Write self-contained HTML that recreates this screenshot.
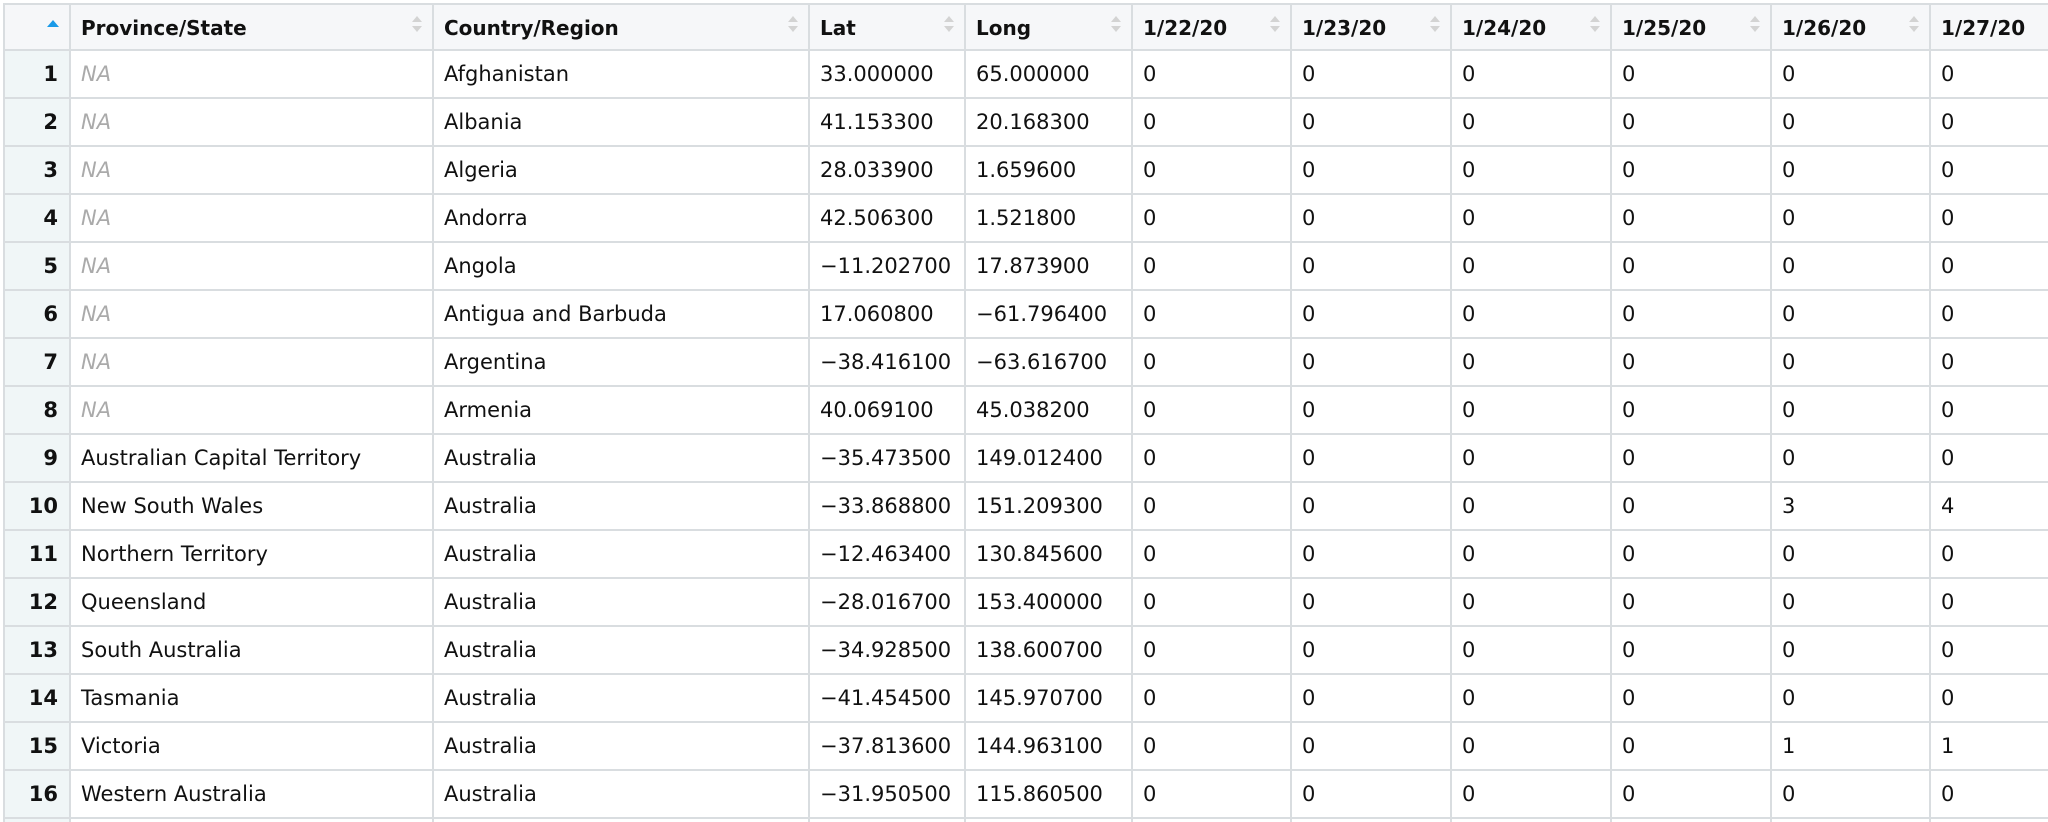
<!DOCTYPE html>
<html><head><meta charset="utf-8"><style>
html,body{margin:0;padding:0;background:#fff;width:2048px;height:822px;overflow:hidden}
#t{position:absolute;left:3px;top:3px;font-family:"DejaVu Sans","Liberation Sans",sans-serif;font-size:21px;color:#111;border-top:2px solid #d9dde0;border-left:2px solid #d9dde0}
.r{display:flex;height:48px}
.r>div{box-sizing:border-box;height:48px;border-right:2px solid #d9dde0;border-bottom:2px solid #d9dde0;padding:0 0 0 10px;line-height:47px;white-space:nowrap;overflow:hidden;position:relative;flex:none}
.h>div{background:#f6f7f9;font-weight:bold;font-size:20px;line-height:46px;height:46px}
.h{height:46px}
.r>div:nth-child(1){width:66px;background:#f0f6f7;text-align:right;font-weight:bold;padding:0 11px 0 0}
.h>div:nth-child(1){background:#f6f7f9}
.r>div:nth-child(2){width:363px}
.r>div:nth-child(3){width:376px}
.r>div:nth-child(4){width:156px}
.r>div:nth-child(5){width:167px}
.r>div:nth-child(6){width:159px}
.r>div:nth-child(7){width:160px}
.r>div:nth-child(8){width:160px}
.r>div:nth-child(9){width:160px}
.r>div:nth-child(10){width:159px}
.r>div:nth-child(11){width:160px}
.r.e,.r.e>div{height:3px;border-bottom:none}
.na{color:#aaa;font-style:italic}
.s{position:absolute;right:10px;top:11px;width:10px;height:18px}
.s:before{content:"";position:absolute;left:0;top:0;border-left:5px solid transparent;border-right:5px solid transparent;border-bottom:6px solid #d3d3d3}
.s:after{content:"";position:absolute;left:0;top:10px;border-left:5px solid transparent;border-right:5px solid transparent;border-top:6px solid #d3d3d3}
.b{position:absolute;right:10px;top:15px;border-left:6px solid transparent;border-right:6px solid transparent;border-bottom:7px solid #1a9ae8}
</style></head><body>
<div id="t">
<div class="r h"><div><span class="b"></span></div><div>Province/State<span class="s"></span></div><div>Country/Region<span class="s"></span></div><div>Lat<span class="s"></span></div><div>Long<span class="s"></span></div><div>1/22/20<span class="s"></span></div><div>1/23/20<span class="s"></span></div><div>1/24/20<span class="s"></span></div><div>1/25/20<span class="s"></span></div><div>1/26/20<span class="s"></span></div><div>1/27/20</div></div>
<div class="r"><div>1</div><div class="na">NA</div><div>Afghanistan</div><div>33.000000</div><div>65.000000</div><div>0</div><div>0</div><div>0</div><div>0</div><div>0</div><div>0</div></div>
<div class="r"><div>2</div><div class="na">NA</div><div>Albania</div><div>41.153300</div><div>20.168300</div><div>0</div><div>0</div><div>0</div><div>0</div><div>0</div><div>0</div></div>
<div class="r"><div>3</div><div class="na">NA</div><div>Algeria</div><div>28.033900</div><div>1.659600</div><div>0</div><div>0</div><div>0</div><div>0</div><div>0</div><div>0</div></div>
<div class="r"><div>4</div><div class="na">NA</div><div>Andorra</div><div>42.506300</div><div>1.521800</div><div>0</div><div>0</div><div>0</div><div>0</div><div>0</div><div>0</div></div>
<div class="r"><div>5</div><div class="na">NA</div><div>Angola</div><div>−11.202700</div><div>17.873900</div><div>0</div><div>0</div><div>0</div><div>0</div><div>0</div><div>0</div></div>
<div class="r"><div>6</div><div class="na">NA</div><div>Antigua and Barbuda</div><div>17.060800</div><div>−61.796400</div><div>0</div><div>0</div><div>0</div><div>0</div><div>0</div><div>0</div></div>
<div class="r"><div>7</div><div class="na">NA</div><div>Argentina</div><div>−38.416100</div><div>−63.616700</div><div>0</div><div>0</div><div>0</div><div>0</div><div>0</div><div>0</div></div>
<div class="r"><div>8</div><div class="na">NA</div><div>Armenia</div><div>40.069100</div><div>45.038200</div><div>0</div><div>0</div><div>0</div><div>0</div><div>0</div><div>0</div></div>
<div class="r"><div>9</div><div>Australian Capital Territory</div><div>Australia</div><div>−35.473500</div><div>149.012400</div><div>0</div><div>0</div><div>0</div><div>0</div><div>0</div><div>0</div></div>
<div class="r"><div>10</div><div>New South Wales</div><div>Australia</div><div>−33.868800</div><div>151.209300</div><div>0</div><div>0</div><div>0</div><div>0</div><div>3</div><div>4</div></div>
<div class="r"><div>11</div><div>Northern Territory</div><div>Australia</div><div>−12.463400</div><div>130.845600</div><div>0</div><div>0</div><div>0</div><div>0</div><div>0</div><div>0</div></div>
<div class="r"><div>12</div><div>Queensland</div><div>Australia</div><div>−28.016700</div><div>153.400000</div><div>0</div><div>0</div><div>0</div><div>0</div><div>0</div><div>0</div></div>
<div class="r"><div>13</div><div>South Australia</div><div>Australia</div><div>−34.928500</div><div>138.600700</div><div>0</div><div>0</div><div>0</div><div>0</div><div>0</div><div>0</div></div>
<div class="r"><div>14</div><div>Tasmania</div><div>Australia</div><div>−41.454500</div><div>145.970700</div><div>0</div><div>0</div><div>0</div><div>0</div><div>0</div><div>0</div></div>
<div class="r"><div>15</div><div>Victoria</div><div>Australia</div><div>−37.813600</div><div>144.963100</div><div>0</div><div>0</div><div>0</div><div>0</div><div>1</div><div>1</div></div>
<div class="r"><div>16</div><div>Western Australia</div><div>Australia</div><div>−31.950500</div><div>115.860500</div><div>0</div><div>0</div><div>0</div><div>0</div><div>0</div><div>0</div></div>
<div class="r e"><div></div><div></div><div></div><div></div><div></div><div></div><div></div><div></div><div></div><div></div><div></div></div>
</div>
</body></html>
